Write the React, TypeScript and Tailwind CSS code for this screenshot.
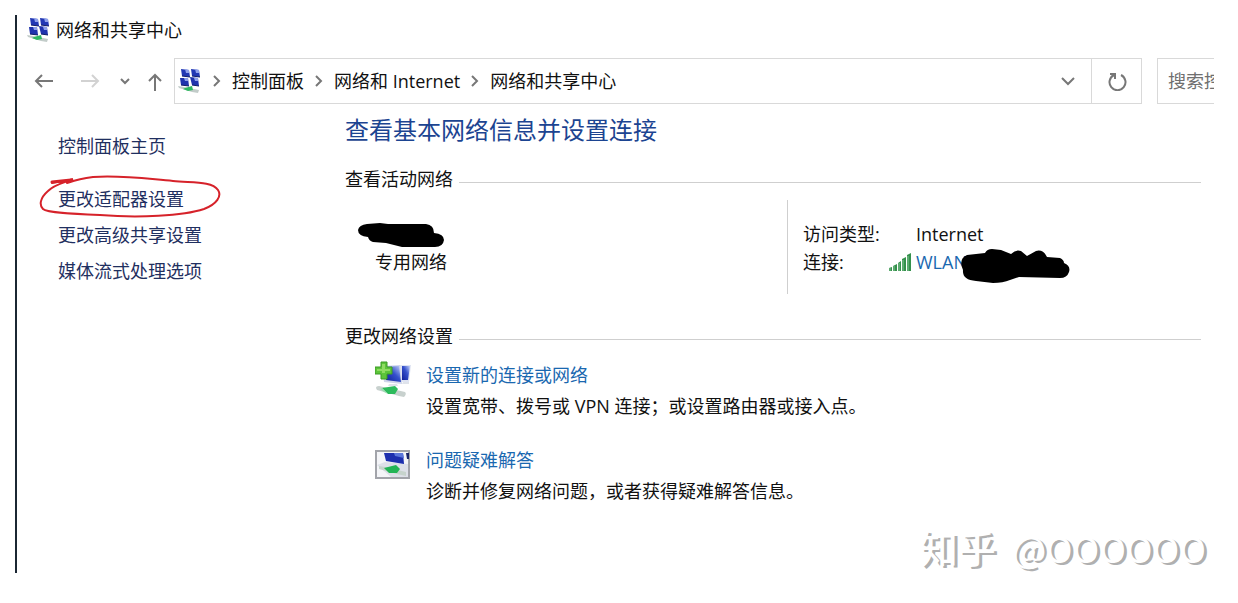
import type { ReactNode } from 'react'

const crumbs = ['控制面板', '网络和 Internet', '网络和共享中心']

const sideLinks = ['更改适配器设置', '更改高级共享设置', '媒体流式处理选项']

function NetworkIcon() {
  return (
    <svg width="24" height="26" viewBox="0 0 24 26" className="shrink-0" aria-hidden="true">
      <path d="M3 1 L11 2 L12 9 L4 8 Z M13 1 L21 2 L22 9 L14 8 Z" fill="#2238b4" />
      <path d="M2 10 L10 10 L11 18 L3 17 Z M12 9 L20 10 L21 18 L14 17 Z" fill="#1f33ad" />
      <path d="M7 1 L11 2 L11 5 L8 5 Z M17 1 L21 2 L21 5 L18 5 Z M6 10 L10 10 L10 13 L7 13 Z M16 10 L20 10 L20 13 L17 13 Z" fill="#8d9fea" />
      <path d="M4 8 L12 9 M14 8 L22 9 M3 17 L11 18 M14 17 L21 18" stroke="#101c68" strokeWidth="1" />
      <path d="M0 18 L6 19 L21 22 L20 25 L14 24 L1 20 Z" fill="#c2ccc9" />
      <path d="M7 20 L14 18 L15 22 L10 23 L5 21 Z" fill="#2fb860" />
    </svg>
  )
}

function NewConnectionIcon() {
  return (
    <svg width="36" height="38" viewBox="0 0 36 38" className="shrink-0" aria-hidden="true">
      <defs>
        <linearGradient id="screen" x1="0" y1="1" x2="1" y2="0">
          <stop offset="0" stopColor="#0e1c96" />
          <stop offset="0.55" stopColor="#3550cc" />
          <stop offset="1" stopColor="#c3d2fa" />
        </linearGradient>
      </defs>
      <path d="M25 4 L36 4 L34 21 L25 21 Z" fill="#dfe4f2" />
      <path d="M27 5 L35 5 L33 19 L27 19 Z" fill="url(#screen)" />
      <path d="M7 5 L25 4 L27 23 L9 21 Z" fill="#cfd5ea" />
      <path d="M10 6 L24 5 L26 21 L11 19 Z" fill="url(#screen)" />
      <path d="M14 23 L22 23 L23 25 L13 25 Z M28 21 L34 21 L34 23 L27 23 Z" fill="#dfe3ea" />
      <path d="M1 27 Q1 25 4 25 L30 31 Q32 33 29 36 L24 35 L2 29 Z" fill="#c8d1ce" />
      <path d="M7 27 L20 25 L23 28 L20 33 L13 33 Z" fill="#2dbb5c" />
      <path d="M7 27 L13 33 L9 31 L5 28 Z" fill="#9bdcb0" />
      <path d="M6 1 H12 V6 H17 V13 H12 V18 H6 V13 H0 V6 H6 Z" fill="#5cc43a" stroke="#3a9a25" strokeWidth="1" />
      <path d="M7 3 H10 V8 H15 V10 H10 V12 H7 V10 H2 V8 H7 Z" fill="#8fdc62" />
    </svg>
  )
}

function TroubleshootIcon() {
  return (
    <svg width="36" height="33" viewBox="0 -4 36 33" className="shrink-0" aria-hidden="true">
      <rect x="1" y="1" width="33" height="27" fill="#f4f5f8" stroke="#a2a4aa" strokeWidth="2" />
      <path d="M2 15 L10 12 L33 14 V27 H16 Z" fill="#dde0e8" />
      <path d="M9 3 L28 3 L29 14 L11 11 Z" fill="#1d2fae" />
      <path d="M19 3 L28 3 L29 8 L20 6 Z" fill="#5b76da" />
      <path d="M31 3 H34 V9 H32 Z" fill="#1a2569" />
      <path d="M4 16 L10 17 L31 22 L31 26 L22 24 L4 19 Z" fill="#c6d3cc" />
      <path d="M9 18 L21 15 L25 19 L22 23 L14 23 Z" fill="#22b455" />
    </svg>
  )
}

function SignalIcon() {
  return (
    <svg width="22" height="19" viewBox="0 0 22 19" className="shrink-0" aria-hidden="true">
      <path d="M0 15 L3 14 V18 H0 Z M4 13 L8 11 V18 H4 Z M9 10 L12 8 V18 H9 Z M13 6 L17 4 V18 H13 Z M18 2 L22 0 V18 H18 Z" fill="#35904c" />
      <path d="M1 15 V18 M5 13 V18 M10 10 V18 M14 7 V18 M19 3 V18" stroke="#86c795" strokeWidth="1" />
    </svg>
  )
}

function Chevron({ className }: { className: string }) {
  return (
    <svg width="8" height="12" viewBox="0 0 8 12" className={className} aria-hidden="true">
      <path d="M1 1 L6 6 L1 11" fill="none" stroke="#777" strokeWidth="2" />
    </svg>
  )
}

function Section({ title, children }: { title: string; children: ReactNode }) {
  return (
    <section>
      <div className="flex h-[26px] items-center gap-[6px]">
        <h2 className="leading-[26px]">{title}</h2>
        <div className="mt-[6px] h-px flex-1 bg-[#cfcfcf]" />
      </div>
      {children}
    </section>
  )
}

function Task({ icon, title, text }: { icon: ReactNode; title: string; text: string }) {
  return (
    <div className="flex items-start gap-[15px]">
      {icon}
      <div className="leading-7">
        <a href="#" className="block text-[#1a68b0]">{title}</a>
        <p className="mt-[3px]">{text}</p>
      </div>
    </div>
  )
}

export default function App() {
  return (
    <div
      lang="zh-CN"
      className="bg-white pt-[15px] pr-6 pb-[30px] pl-[15px] font-['Open_Sans','Noto_Sans_CJK_SC',sans-serif] text-[18px] text-[#111]"
    >
      <div className="border-l-2 border-[#1b2733]">
        <header className="flex h-[30px] items-center gap-[5px] pl-[10px]">
          <NetworkIcon />
          <h1 className="leading-7">网络和共享中心</h1>
        </header>

        <nav className="mt-[13px] flex h-[46px] items-stretch">
          <div className="flex w-[157px] shrink-0 items-center pl-[17px]">
            <button aria-label="后退">
              <svg width="20" height="18" viewBox="0 0 20 18" fill="none" stroke="#777" strokeWidth="2">
                <path d="M19 9 H2 M8 3 L2 9 L8 15" />
              </svg>
            </button>
            <button aria-label="前进" className="ml-[26px]">
              <svg width="20" height="18" viewBox="0 0 20 18" fill="none" stroke="#d2d2d2" strokeWidth="2">
                <path d="M1 9 H18 M12 3 L18 9 L12 15" />
              </svg>
            </button>
            <button aria-label="最近位置" className="ml-5">
              <svg width="10" height="8" viewBox="0 0 10 8" fill="none" stroke="#777" strokeWidth="2">
                <path d="M1 2 L5 6 L9 2" />
              </svg>
            </button>
            <button aria-label="上移" className="ml-[18px]">
              <svg width="14" height="20" viewBox="0 0 14 20" fill="none" stroke="#777" strokeWidth="2">
                <path d="M7 20 V4 M1 10 L7 4 L13 10" />
              </svg>
            </button>
          </div>

          <div className="flex flex-1 border border-[#d9d9d9]">
            <div className="flex flex-1 items-center pl-[3px]">
              <NetworkIcon />
              {crumbs.map((crumb) => (
                <div key={crumb} className="flex items-center">
                  <Chevron className="mx-[11px]" />
                  <a href="#" className="leading-7">{crumb}</a>
                </div>
              ))}
            </div>
            <button aria-label="展开地址" className="px-4">
              <svg width="14" height="10" viewBox="0 0 14 10" fill="none" stroke="#777" strokeWidth="2">
                <path d="M1 2 L7 8 L13 2" />
              </svg>
            </button>
            <button aria-label="刷新" className="flex w-[50px] items-center justify-center border-l border-[#d9d9d9]">
              <svg width="20" height="20" viewBox="0 0 20 20" fill="none" stroke="#777" strokeWidth="2">
                <path d="M14 4 A8 8 0 1 1 7 4" />
                <path d="M3 3 H8 V8" />
              </svg>
            </button>
          </div>

          <input
            type="text"
            aria-label="搜索控制面板"
            placeholder="搜索控制面板"
            className="ml-[15px] w-[57px] shrink-0 border border-r-0 border-[#d9d9d9] pl-[10px] placeholder:text-[#6f6f6f]"
          />
        </nav>

        <div className="flex pr-[13px]">
          <aside className="w-[328px] shrink-0 pt-7 pl-[41px] text-[#1f2f60]">
            <a href="#" className="block leading-7">控制面板主页</a>
            <ul className="relative mt-[25px] space-y-2 leading-7">
              {sideLinks.map((link) => (
                <li key={link}><a href="#">{link}</a></li>
              ))}
              {/* hand-drawn marker around the adapter link */}
              <svg
                width="184"
                height="46"
                viewBox="0 0 184 46"
                className="pointer-events-none absolute -top-3 -left-5"
                fill="none"
                stroke="#d6222a"
                strokeWidth="2"
                strokeLinecap="round"
                aria-hidden="true"
              >
                <path d="M14 10 C22 8 28 9 35 6 C26 10 17 11 10 18 C2 25 1 32 5 36 C9 40 35 41 62 42 C100 45 145 43 166 36 C179 31 184 23 180 17 C174 8 154 10 135 8 C110 6 85 2 55 4 C40 6 35 8 29 10" />
                <path d="M14 9 L33 7" strokeWidth="3" />
              </svg>
            </ul>
          </aside>

          <main className="min-w-0 flex-1 pt-[10px]">
            <p className="mb-5 text-[24px] leading-8 text-[#1c4491]">查看基本网络信息并设置连接</p>

            <Section title="查看活动网络">
              <div className="mt-2 mb-[29px] flex h-[94px]">
                <div className="flex-1 pt-[22px]">
                  <svg width="86" height="26" viewBox="0 0 86 26" className="ml-[13px]" role="img" aria-label="已涂抹">
                    <path d="M9 2 L22 1 L30 2 L68 2 Q76 3 76 11 Q86 12 86 18 Q85 25 77 25 L44 25 L28 21 L15 20 Q11 19 10 15 Q0 14 0 8 Q1 3 9 2 Z" fill="#000" />
                  </svg>
                  <p className="ml-[30px] leading-7">专用网络</p>
                </div>
                <dl className="grid w-[414px] grid-cols-[86px_1fr] content-start border-l border-[#cfcfcf] pt-5 pl-[15px] leading-7">
                  <dt>访问类型:</dt>
                  <dd className="pl-[27px]">Internet</dd>
                  <dt>连接:</dt>
                  <dd className="relative flex items-center gap-[5px]">
                    <SignalIcon />
                    <a href="#" className="text-[#1a68b0]">WLAN</a>
                    <svg
                      width="109"
                      height="34"
                      viewBox="0 0 109 34"
                      className="absolute top-px left-[72px]"
                      role="img"
                      aria-label="已涂抹"
                    >
                      <path d="M6 6 L24 4 Q26 0 31 0 L40 1 L50 5 Q55 0 60 2 L66 7 L75 2 Q82 0 86 8 L99 9 Q103 11 103 14 Q110 17 108 23 Q106 29 99 29 L58 28 L49 31 Q42 34 32 34 L15 32 Q1 31 2 21 Q-3 10 6 6 Z" fill="#000" />
                    </svg>
                  </dd>
                </dl>
              </div>
            </Section>

            <Section title="更改网络设置">
              <div className="mt-3 space-y-[26px] pl-[30px]">
                <Task
                  icon={<NewConnectionIcon />}
                  title="设置新的连接或网络"
                  text="设置宽带、拨号或 VPN 连接；或设置路由器或接入点。"
                />
                <Task
                  icon={<TroubleshootIcon />}
                  title="问题疑难解答"
                  text="诊断并修复网络问题，或者获得疑难解答信息。"
                />
              </div>
            </Section>
          </main>
        </div>

        <footer className="mt-5 flex items-center justify-end gap-4 pr-2 pb-1 font-['Noto_Sans_CJK_SC',sans-serif] text-[36px] leading-11 text-white [text-shadow:3px_2px_0_#b0b0b0]">
          <span className="text-[38px] font-medium">知乎</span>
          <span>@OOOOOO</span>
        </footer>
      </div>
    </div>
  )
}
